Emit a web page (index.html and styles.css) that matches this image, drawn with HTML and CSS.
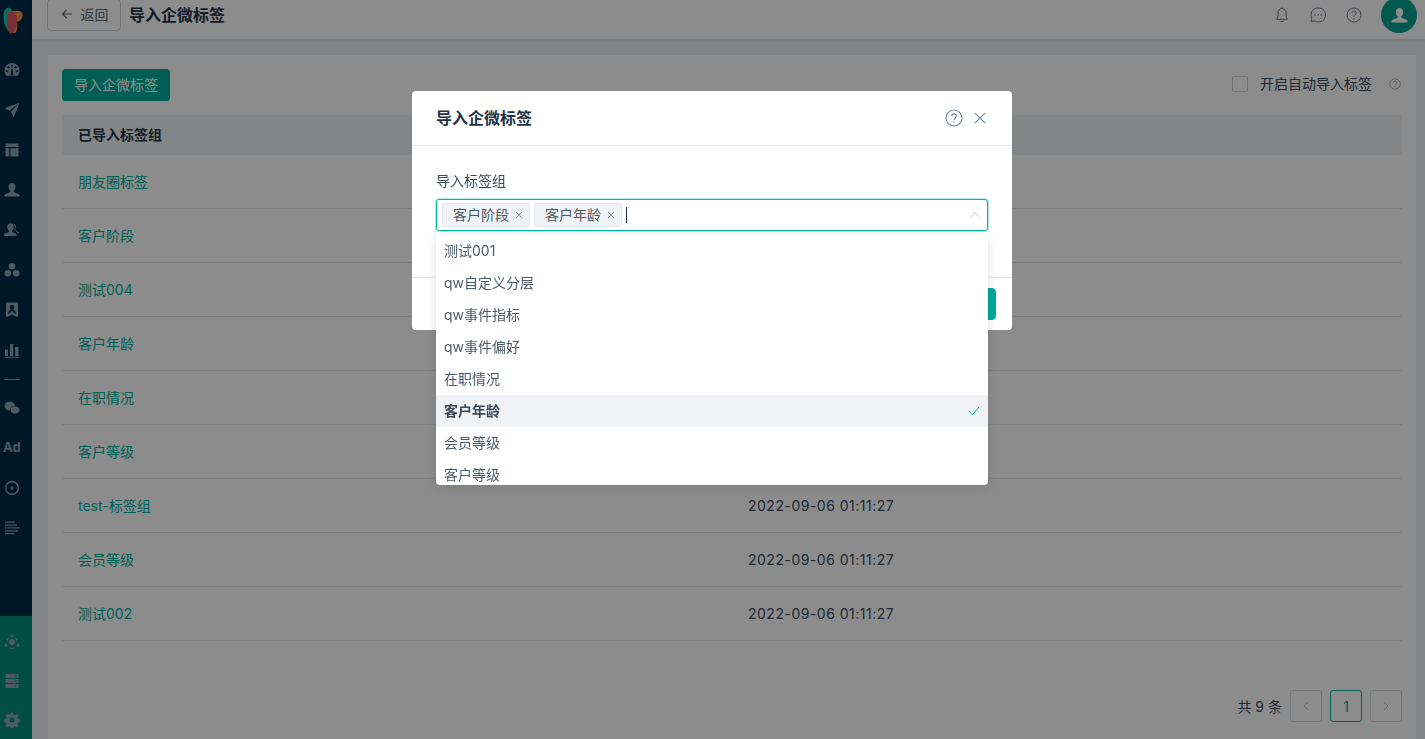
FILE: index.html
```html
<!DOCTYPE html>
<html lang="zh">
<head>
<meta charset="utf-8">
<title>导入企微标签</title>
<link rel="stylesheet" href="styles.css">
</head>
<body>
<div class="app">
  <aside class="sidebar">
    <div class="side-top">
      <svg class="logo" viewBox="0 0 32 40"><path d="M7 8c3-1 5 1 5 4v21c-4 0-6-5-8-11-1-5-1-12 3-14z" fill="#16c8ae"/><path d="M12 11h7c3 0 4 3 3.500 5.500-.5 3-3 5-5.500 5.500 1 4 0 8-1 10-1 1.500-3 1.500-4 0z" fill="#f7923c"/><path d="M7 14c0-2 3-3 6-2 3 .5 4 3 4 6 0 5-1 11-3 14-2 2-4 2-5 0-2-5-2-12-2-18z" fill="#e05563"/></svg>
      <div class="side-icons">
        <span class="si"><svg viewBox="0 0 16 16"><path d="M8 1a7.500 7.500 0 0 0-7.500 7.500c0 2 .7 3.800 2 5.200h11c1.300-1.400 2-3.200 2-5.200A7.500 7.500 0 0 0 8 1zM7.200 3h1.600v2.500H7.200zM3 5l1.200-1.100L6 5.600 4.800 6.700zM1.800 8.500h2.400v1.400H1.800zm10 0h2.400v1.400h-2.400zM10 5.600l1.800-1.700L13 5l-1.800 1.700zM6.800 13l.5-6h1.400l.5 6z" fill-rule="evenodd"/></svg></span>
        <span class="si"><svg viewBox="0 0 16 16"><path d="M15.500.8.500 6.300l5 2.500L15.500.8zM15.500.8 7 9.800l2.500 5.700z"/></svg></span>
        <span class="si"><svg viewBox="0 0 16 16"><path d="M1.500 1.500h13v3.500h-13zM1.500 6.300h3.800v8.200H2.500a1 1 0 0 1-1-1zM6.500 6.300h8v7.200a1 1 0 0 1-1 1h-7z"/></svg></span>
        <span class="si"><svg viewBox="0 0 16 16"><path d="M8 1a3.500 3.500 0 0 0-3.500 3.700c0 1.700.8 3.300 1.800 4.100v1.200L1.500 12c-.6.300-1 .8-1 1.500v1h15v-1c0-.7-.4-1.200-1-1.500l-4.800-2V8.800c1-.8 1.800-2.400 1.800-4.100A3.500 3.500 0 0 0 8 1z"/></svg></span>
        <span class="si"><svg viewBox="0 0 16 16"><path d="M6.500 1.500a3.300 3.300 0 0 0-3.300 3.500c0 1.500.7 3 1.700 3.800v1.100L1 11.500c-.6.300-1 .8-1 1.400v1.100h12.500v-1.100c0-.6-.3-1.100-1-1.400L8 9.900V8.800c1-.8 1.700-2.300 1.700-3.800a3.300 3.300 0 0 0-3.200-3.500z"/><path d="M9.500 1.800c1.800.5 2.300 3.500 1.200 5.700l4.300 4" fill="none" stroke="#8fa3b3" stroke-width="1"/></svg></span>
        <span class="si"><svg viewBox="0 0 16 16"><circle cx="8" cy="4.200" r="3.300"/><circle cx="3.800" cy="11.300" r="3.300"/><circle cx="12.200" cy="11.300" r="3.300"/></svg></span>
        <span class="si"><svg viewBox="0 0 16 16"><path fill-rule="evenodd" d="M2 .5h12v15l-6-3-6 3zM8 3a2.200 2.200 0 0 0-2.200 2.300c0 1 .5 1.800 1 2.200L4.300 9.700v2.500L8 8.800l3.700 3.400V9.700L9.200 7.500c.5-.4 1-1.200 1-2.200A2.200 2.200 0 0 0 8 3z"/></svg></span>
        <span class="si"><svg viewBox="0 0 16 16"><path d="M1 7.500h3V14H1zM6 2h3.200v12H6zM11.200 5H14.500v9h-3.300zM.8 14.800h14v.9H.8z"/></svg></span>
      </div>
      <div class="side-line"></div>
      <div class="side-icons">
        <span class="si"><svg viewBox="0 0 16 16"><ellipse cx="5.800" cy="6" rx="5.300" ry="4.500"/><ellipse cx="11" cy="10" rx="4.700" ry="4" stroke="#002a4a" stroke-width=".6"/></svg></span>
        <span class="si si-text">Ad</span>
        <span class="si"><svg viewBox="0 0 18 18"><circle cx="9" cy="9" r="7.200" fill="none" stroke="#8fa3b3" stroke-width="1.800"/><path d="M3.500 4.500A7.200 7.200 0 0 0 4 14" fill="none" stroke="#002a4a" stroke-width="1" stroke-dasharray="1 1"/><circle cx="9" cy="9" r="1.700"/></svg></span>
        <span class="si"><svg viewBox="0 0 16 16"><path d="M1 1.500h10v1.300H1zM1 4.500h12v1.300H1zM1 7.300h1.500v1.300H1zM3.500 7.300h12v1.300h-12zM1 10.200h13v1.300H1zM1 13h9.500v1.300H1z"/></svg></span>
      </div>
    </div>
    <div class="side-bottom">
      <span class="si"><svg viewBox="0 0 16 16"><circle cx="8" cy="8" r="3"/><circle cx="8" cy="1.800" r="1.500"/><circle cx="2" cy="11.300" r="1.500"/><circle cx="14" cy="11.300" r="1.500"/><path d="M3.200 7A5 5 0 0 1 5.300 3.500M12.800 7a5 5 0 0 0-2.100-3.500M5 13.800a6 6 0 0 0 6 0" fill="none" stroke="#8fa3b3"/></svg></span>
      <span class="si"><svg viewBox="0 0 16 16"><path d="M1.500 1h13v4h-13zM1.500 6h13v4h-13zM1.500 11h13v4h-13z"/><circle cx="12" cy="3" r=".8" fill="#008c78"/><circle cx="12" cy="8" r=".8" fill="#008c78"/><circle cx="12" cy="13" r=".8" fill="#008c78"/></svg></span>
      <span class="si"><svg viewBox="0 0 16 16"><path fill-rule="evenodd" d="M6.700.5h2.600l.4 2 1.300.6 1.800-1.100 1.800 1.800-1.100 1.800.6 1.300 2 .4v2.600l-2 .4-.6 1.300 1.100 1.800-1.800 1.800-1.800-1.100-1.300.6-.4 2H6.700l-.4-2-1.300-.6-1.800 1.100-1.800-1.800 1.100-1.800-.6-1.300-2-.4V6.900l2-.4.6-1.300L1.400 3.400l1.800-1.800L5 2.700l1.300-.6zM8 5.500a2.500 2.500 0 1 0 0 5 2.500 2.500 0 0 0 0-5z"/></svg></span>
    </div>
  </aside>

  <div class="main">
    <header class="topbar">
      <div class="top-left">
        <button class="back-btn"><svg viewBox="0 0 14 14" width="14" height="14"><path d="M12 7H2.500M6.500 3 2.500 7l4 4" fill="none" stroke="currentColor" stroke-width="1.200"/></svg><span>返回</span></button>
        <h1 class="page-title">导入企微标签</h1>
      </div>
      <div class="top-right">
        <svg class="ti" viewBox="0 0 16 16"><path d="M8 1.500c-2.600 0-4 2-4 4.500v3.500L2.700 12.300h10.600L12 9.500V6c0-2.500-1.400-4.500-4-4.500zM6.300 14c.4.800 3 .8 3.400 0M8 .5v1" fill="none" stroke="currentColor" stroke-width="1"/></svg>
        <svg class="ti" viewBox="0 0 16 16"><path d="M8 1a7 7 0 0 0-6.300 10L1 14.500l3.800-.6A7 7 0 1 0 8 1z" fill="none" stroke="currentColor"/><circle cx="5" cy="8" r=".8" fill="currentColor"/><circle cx="8" cy="8" r=".8" fill="currentColor"/><circle cx="11" cy="8" r=".8" fill="currentColor"/></svg>
        <svg class="ti" viewBox="0 0 16 16"><circle cx="8" cy="8" r="7" fill="none" stroke="currentColor"/><path d="M5.900 6.200C6 3.500 10.100 3.600 10.100 6.200c0 1.700-2.100 1.700-2.100 3.500" fill="none" stroke="currentColor"/><circle cx="8" cy="11.700" r=".7" fill="currentColor"/></svg>
        <div class="avatar"><svg viewBox="0 0 16 16" width="17" height="17"><path d="M8 1a3.500 3.500 0 0 0-3.500 3.700c0 1.700.8 3.300 1.800 4.100v1.200L1.500 12c-.6.300-1 .8-1 1.500v1h15v-1c0-.7-.4-1.200-1-1.500l-4.800-2V8.800c1-.8 1.800-2.400 1.800-4.100A3.500 3.500 0 0 0 8 1z" fill="#fff"/></svg></div>
      </div>
    </header>

    <section class="card">
      <div class="toolbar">
        <button class="primary-btn">导入企微标签</button>
        <div class="auto-import">
          <span class="checkbox"></span>
          <span class="auto-label">开启自动导入标签</span>
          <svg class="auto-help" viewBox="0 0 16 16"><circle cx="8" cy="8" r="7" fill="none" stroke="currentColor"/><path d="M5.900 6.200C6 3.500 10.100 3.600 10.100 6.200c0 1.700-2.100 1.700-2.100 3.500" fill="none" stroke="currentColor"/><circle cx="8" cy="11.700" r=".7" fill="currentColor"/></svg>
        </div>
      </div>
      <div class="table">
        <div class="row head"><span class="cell-name">已导入标签组</span><span class="cell-time">导入时间</span></div>
        <div class="row"><a class="link">朋友圈标签</a><span class="cell-time">2022-09-06 01:11:27</span></div>
        <div class="row"><a class="link">客户阶段</a><span class="cell-time">2022-09-06 01:11:27</span></div>
        <div class="row"><a class="link">测试004</a><span class="cell-time">2022-09-06 01:11:27</span></div>
        <div class="row"><a class="link">客户年龄</a><span class="cell-time">2022-09-06 01:11:27</span></div>
        <div class="row"><a class="link">在职情况</a><span class="cell-time">2022-09-06 01:11:27</span></div>
        <div class="row"><a class="link">客户等级</a><span class="cell-time">2022-09-06 01:11:27</span></div>
        <div class="row"><a class="link">test-标签组</a><span class="cell-time">2022-09-06 01:11:27</span></div>
        <div class="row"><a class="link">会员等级</a><span class="cell-time">2022-09-06 01:11:27</span></div>
        <div class="row"><a class="link">测试002</a><span class="cell-time">2022-09-06 01:11:27</span></div>
      </div>
      <div class="pager">
        <span class="total">共 9 条</span>
        <button class="page-btn"><svg viewBox="0 0 12 12" width="12" height="12"><path d="M8 2 4 6l4 4" fill="none" stroke="currentColor"/></svg></button>
        <button class="page-btn current">1</button>
        <button class="page-btn"><svg viewBox="0 0 12 12" width="12" height="12"><path d="m4 2 4 4-4 4" fill="none" stroke="currentColor"/></svg></button>
      </div>
    </section>
  </div>
</div>

<div class="mask">
  <div class="modal">
    <div class="modal-head">
      <h2 class="modal-title">导入企微标签</h2>
      <div class="modal-tools">
        <svg class="mh-help" viewBox="0 0 18 18"><circle cx="9" cy="9" r="8" fill="none" stroke="currentColor" stroke-width="1.100"/><path d="M6.700 7C6.800 4.100 11.300 4.200 11.300 7c0 1.900-2.300 1.900-2.300 3.800" fill="none" stroke="currentColor" stroke-width="1.100"/><circle cx="9" cy="13" r=".8" fill="currentColor"/></svg>
        <svg class="mh-close" viewBox="0 0 12 12"><path d="m.8.800 10.400 10.400M11.200.8.800 11.200" fill="none" stroke="currentColor" stroke-width="1.100"/></svg>
      </div>
    </div>
    <div class="modal-body">
      <label class="field-label">导入标签组</label>
      <div class="select-wrap">
        <div class="select">
          <span class="tag">客户阶段<svg viewBox="0 0 8 8" width="8" height="8"><path d="m1 1 6 6M7 1 1 7" fill="none" stroke="currentColor"/></svg></span>
          <span class="tag">客户年龄<svg viewBox="0 0 8 8" width="8" height="8"><path d="m1 1 6 6M7 1 1 7" fill="none" stroke="currentColor"/></svg></span>
          <span class="caret"></span>
          <svg class="arrow" viewBox="0 0 12 8" width="12" height="8"><path d="M1 6.500 6 1.500l5 5" fill="none" stroke="currentColor"/></svg>
        </div>
        <ul class="dropdown">
          <li>测试001</li>
          <li>qw自定义分层</li>
          <li>qw事件指标</li>
          <li>qw事件偏好</li>
          <li>在职情况</li>
          <li class="selected">客户年龄<svg viewBox="0 0 12 10" width="12" height="10"><path d="m1 5 3.500 3.800L11 1" fill="none" stroke="currentColor"/></svg></li>
          <li>会员等级</li>
          <li>客户等级</li>
        </ul>
      </div>
    </div>
    <div class="modal-foot">
      <button class="foot-btn">取消</button>
      <button class="foot-btn ok">确定</button>
    </div>
  </div>
</div>
</body>
</html>
```

FILE: styles.css
```css
* { box-sizing: border-box; }
html, body { margin: 0; padding: 0; height: 739px; overflow: hidden; }
body { font-family: Inter, "Noto Sans CJK SC", sans-serif; font-size: 14px; color: #3b4a5a; background: #f0f2f5; }
button { font-family: inherit; font-size: 14px; cursor: pointer; }
h1, h2, ul { margin: 0; padding: 0; }

.app { display: flex; height: 748px; margin-top: -9px; }

.sidebar { width: 32px; flex: none; background: #002a4a; display: flex; flex-direction: column; justify-content: space-between; }
.side-top { display: flex; flex-direction: column; align-items: flex-start; padding-top: 9px; }
.logo { width: 32px; height: 40px; margin-bottom: 10px; }
.side-icons { display: flex; flex-direction: column; }
.si { width: 24px; height: 40px; display: flex; align-items: center; justify-content: center; }
.si svg { width: 16px; height: 16px; fill: #8fa3b3; }
.si-text { font-size: 13px; font-weight: 700; color: #8fa3b3; letter-spacing: .3px; padding-bottom: 2px; }
.side-line { width: 16px; height: 1px; background: #8fa3b3; margin: 9px 0 8px 4px; }
.side-bottom { background: #008c78; height: 123px; padding-top: 7px; display: flex; flex-direction: column; }

.main { flex: 1; min-width: 0; display: flex; flex-direction: column; }
.topbar { height: 48px; flex: none; background: #fff; box-shadow: 0 1px 4px rgba(0, 21, 41, .15); display: flex; align-items: center; justify-content: space-between; padding: 0 8px 0 15px; position: relative; }
.top-left { display: flex; align-items: center; gap: 8px; }
.back-btn { height: 32px; width: 74px; padding: 0 0 2px; background: #fff; border: 1px solid #c8d0d8; border-radius: 4px; color: #5b6b7b; display: flex; align-items: center; justify-content: center; gap: 7px; }
.page-title { font-size: 16px; font-weight: 600; color: #1f3347; margin-bottom: 2px; }
.top-right { display: flex; align-items: center; }
.ti { width: 16px; height: 16px; color: #6b7b8b; margin-right: 20px; }
.avatar { width: 36px; height: 36px; margin-left: -1px; border-radius: 50%; background: #00a090; display: flex; align-items: center; justify-content: center; }

.card { margin: 16px 9px 0 16px; flex: 1; background: #fff; padding: 14px; display: flex; flex-direction: column; position: relative; }
.toolbar { display: flex; justify-content: space-between; align-items: center; margin-bottom: 14px; }
.primary-btn { height: 32px; padding: 0 11px 2px; border: 1px solid #00ad9c; background: #00ad9c; color: #fff; border-radius: 3px; }
.auto-import { display: flex; align-items: center; margin-bottom: 2px; }
.checkbox { width: 16px; height: 16px; border: 1px solid #c8d0d8; border-radius: 2px; margin-right: 12px; }
.auto-label { color: #3b4a5a; margin-right: 17px; margin-bottom: 2px; }
.auto-help { width: 12px; height: 12px; color: #8a96a3; margin-right: 1px; }

.row { display: grid; grid-template-columns: 670px 1fr; align-items: center; height: 54px; padding-left: 16px; border-bottom: 1px solid #e6e8eb; color: #3b4a5a; }
.cell-time { letter-spacing: .5px; }
.head { height: 40px; background: #f0f2f5; border-bottom: 0; font-weight: 600; color: #1f3347; }
.cell-name { margin-bottom: 2px; }
.link { color: #00ad9c; margin-bottom: 2px; }

.pager { display: flex; align-items: center; justify-content: flex-end; margin-top: 49px; }
.total { margin-right: 8px; color: #3b4a5a; }
.page-btn { width: 32px; height: 32px; padding: 0; background: #fff; border: 1px solid #d3d8de; border-radius: 3px; color: #b3bcc5; margin-left: 8px; display: flex; align-items: center; justify-content: center; }
.page-btn.current { border-color: #00ad9c; color: #00ad9c; }
.total + .page-btn { margin-left: 0; }

.mask { position: fixed; inset: 0; background: rgba(0, 0, 0, .45); display: flex; justify-content: center; padding-top: 91px; }
.modal { width: 600px; height: 239px; background: #fff; border-radius: 4px; display: flex; flex-direction: column; margin-left: -1px; }
.modal-head { height: 55px; padding: 0 24px 2px; border-bottom: 1px solid #e6e8eb; display: flex; align-items: center; justify-content: space-between; }
.modal-title { font-size: 16px; font-weight: 600; color: #1f3347; }
.modal-tools { display: flex; align-items: center; gap: 11px; padding-right: 2px; margin-top: 3px; }
.mh-help { width: 18px; height: 18px; color: #6f8296; }
.mh-close { width: 12px; height: 12px; color: #6f8296; }
.modal-body { height: 132px; padding: 25px 24px 0; display: flex; flex-direction: column; }
.field-label { line-height: 20px; margin-bottom: 8px; color: #3b4a5a; height: 20px; }
.select-wrap { position: relative; }
.select { height: 32px; border: 1px solid #00b8a3; border-radius: 3px; box-shadow: 0 0 0 1px rgba(0, 184, 163, .3); display: flex; align-items: center; padding-left: 5px; gap: 4px; position: relative; }
.tag { height: 24px; display: flex; align-items: center; padding: 0 6px 2px 10px; gap: 6px; background: #f0f2f5; border: 1px solid #e4e7ed; border-radius: 2px; color: #4a5a6a; }
.tag svg { color: #8a96a3; margin-top: 2px; }
.caret { width: 1px; height: 16px; background: #1f3347; }
.arrow { position: absolute; right: 6px; top: 11px; color: #c4cad1; }
.dropdown { position: absolute; left: 0; right: 0; top: 36px; height: 250px; overflow: hidden; list-style: none; background: #fff; border-radius: 4px; box-shadow: 0 2px 12px rgba(0, 0, 0, .12); z-index: 2; }
.dropdown li { height: 32px; line-height: 32px; padding: 0 8px; color: #4a5a6a; display: flex; align-items: center; justify-content: space-between; }
.dropdown li.selected { background: #f0f2f5; font-weight: 600; color: #3b4a5a; }
.selected svg { color: #00b8a3; }
.modal-foot { height: 53px; border-top: 1px solid #e6e8eb; padding: 10px 16px 0; display: flex; justify-content: flex-end; gap: 8px; }
.foot-btn { height: 32px; padding: 0 16px; background: #fff; border: 1px solid #d3d8de; border-radius: 4px; color: #3b4a5a; }
.foot-btn.ok { background: #00ab9a; border-color: #00ab9a; color: #fff; }
```
